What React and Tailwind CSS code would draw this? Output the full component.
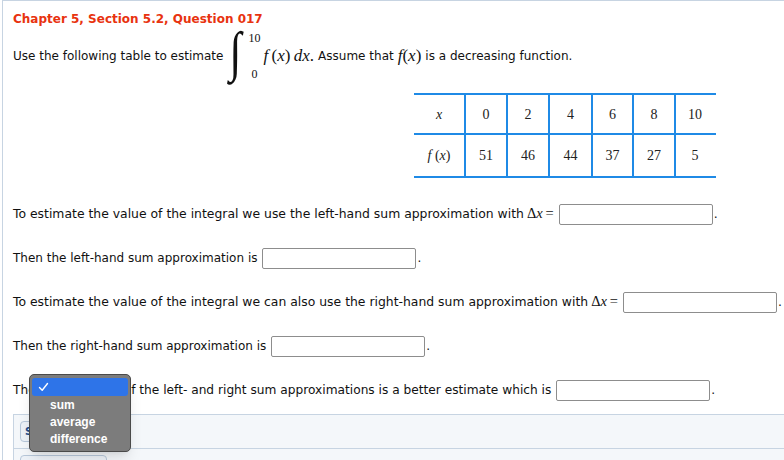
import React from 'react';

const sans = { fontFamily: '"DejaVu Sans", Verdana, sans-serif' };
const serif = { fontFamily: '"Liberation Serif", "Times New Roman", serif' };

const Blank = () => (
  <span className="inline-block w-[154px] h-[21px] border border-[#8d8d8d] rounded-[2px] bg-white ml-[5px] mr-[1px]" />
);

const DeltaX = () => (
  <span style={serif} className="text-[14.5px] ml-[3px]">
    Δ<i>x</i>&thinsp;=
  </span>
);

const xs = ['0', '2', '4', '6', '8', '10'];
const fx = ['51', '46', '44', '37', '27', '5'];
const widths = ['w-[50px]', 'w-[42px]', 'w-[42px]', 'w-[43px]', 'w-[41px]', 'w-[42px]', 'w-[40px]'];

const ValueTable = () => (
  <div style={serif} className="ml-[411px] w-[302px] text-[14px] text-[#222]">
    <div className="flex h-[42px] border-y-2 border-[#1f8ae6]">
      <div className={`${widths[0]} flex items-center justify-center`}>
        <i>x</i>
      </div>
      {xs.map((v, i) => (
        <div key={v} className={`${widths[i + 1]} flex items-center justify-center border-l-2 border-[#1f8ae6]`}>
          {v}
        </div>
      ))}
    </div>
    <div className="flex h-[43px] border-b-2 border-[#1f8ae6]">
      <div className={`${widths[0]} flex items-center justify-center`}>
        <i>f</i>&nbsp;(<i>x</i>)
      </div>
      {fx.map((v, i) => (
        <div key={i} className={`${widths[i + 1]} flex items-center justify-center border-l-2 border-[#1f8ae6]`}>
          {v}
        </div>
      ))}
    </div>
  </div>
);

const SelectPopup = () => (
  <div
    style={{ fontFamily: '"Liberation Sans", Arial, sans-serif' }}
    className="absolute left-[29px] top-[374px] w-[102px] h-[78px] rounded-[5px] bg-[#7c7c7c] border border-[#4a4a4a] shadow-lg text-white text-[12px] font-bold pt-[3px]"
  >
    <div className="mx-[2px] h-[18px] rounded-[3px] bg-[#2e74e8] flex items-center pl-[6px]">
      <svg width="11" height="10" viewBox="0 0 11 10" fill="none">
        <path d="M1.5 5.5 L4.2 8.2 L9.5 1.5" stroke="white" strokeWidth="1.4" strokeLinecap="round" strokeLinejoin="round" />
      </svg>
    </div>
    <div className="pl-[20px] leading-[17px] mt-[1px]">
      <div>sum</div>
      <div>average</div>
      <div>difference</div>
    </div>
  </div>
);

const Row = ({ size, children }) => (
  <div className={`pl-[10px] flex items-center h-[44px] whitespace-nowrap ${size}`}>{children}</div>
);

export default function App() {
  return (
    <div className="relative w-[784px] h-[460px] overflow-hidden bg-white">
      <div style={sans} className="ml-[2px] h-[470px] border-l border-t border-[#c7d4e2] text-[12px] text-[#111]">
        <div className="pl-[10px] pt-[9px] h-[28px] text-[12px] font-bold text-[#e8330f]">
          Chapter 5, Section 5.2, Question 017
        </div>

        <div className="pl-[10px] flex items-center h-[54px] whitespace-nowrap">
          <span>Use the following table to estimate</span>
          <span className="relative inline-block w-[36px] h-[50px] ml-[4px]">
            <span style={serif} className="absolute left-[2px] top-[-6px] text-[44px] leading-none scale-y-[1.25] origin-top">
              ∫
            </span>
            <span style={serif} className="absolute left-[21px] top-[-2px] text-[12px]">10</span>
            <span style={serif} className="absolute left-[24px] top-[34px] text-[12px]">0</span>
          </span>
          <span style={serif} className="text-[17px] mr-[4px]">
            <i>f</i>&thinsp;(<i>x</i>)&thinsp;<i>dx</i>.
          </span>
          <span>Assume that</span>
          <span style={serif} className="text-[17px] mx-[4px]">
            <i>f</i>(<i>x</i>)
          </span>
          <span>is a decreasing function.</span>
        </div>

        <div className="pt-[10px]">
          <ValueTable />
        </div>

        <div className="mt-[14px]">
          <Row size="text-[12.4px]">
            <span>To estimate the value of the integral we use the left-hand sum approximation with</span>
            <DeltaX />
            <Blank />
            <span>.</span>
          </Row>
          <Row size="text-[12px]">
            <span>Then the left-hand sum approximation is</span>
            <Blank />
            <span>.</span>
          </Row>
          <Row size="text-[12.4px]">
            <span>To estimate the value of the integral we can also use the right-hand sum approximation with</span>
            <DeltaX />
            <Blank />
            <span>.</span>
          </Row>
          <Row size="text-[12px]">
            <span>Then the right-hand sum approximation is</span>
            <Blank />
            <span>.</span>
          </Row>
          <Row size="text-[12.2px]">
            <span>The</span>
            <span className="inline-block w-[78px] h-[20px] mx-[5px] border border-[#aaa] rounded-[4px] bg-[#f2f2f2]" />
            <span>of the left- and right sum approximations is a better estimate which is</span>
            <Blank />
            <span>.</span>
          </Row>
        </div>

        <div className="mt-[2px] ml-[10px] border-l border-t border-[#c7d4e2] bg-[#f4f7fa] h-[34px] flex items-center pl-[6px]">
          <span className="h-[21px] px-[4px] border border-[#b8c8da] rounded-[4px] bg-[#edf2f8] text-[10px] font-bold text-[#1f4e8c] flex items-center">
            SHOW HINT
          </span>
        </div>
        <div className="ml-[10px] border-l border-t border-[#c7d4e2] bg-[#f4f7fa] h-[40px] pt-[6px] pl-[6px]">
          <span className="inline-flex h-[21px] px-[4px] border border-[#b8c8da] rounded-[4px] bg-[#edf2f8] text-[10px] font-bold text-[#1f4e8c] items-center">
            LINK TO TEXT
          </span>
        </div>
      </div>
      <SelectPopup />
    </div>
  );
}
